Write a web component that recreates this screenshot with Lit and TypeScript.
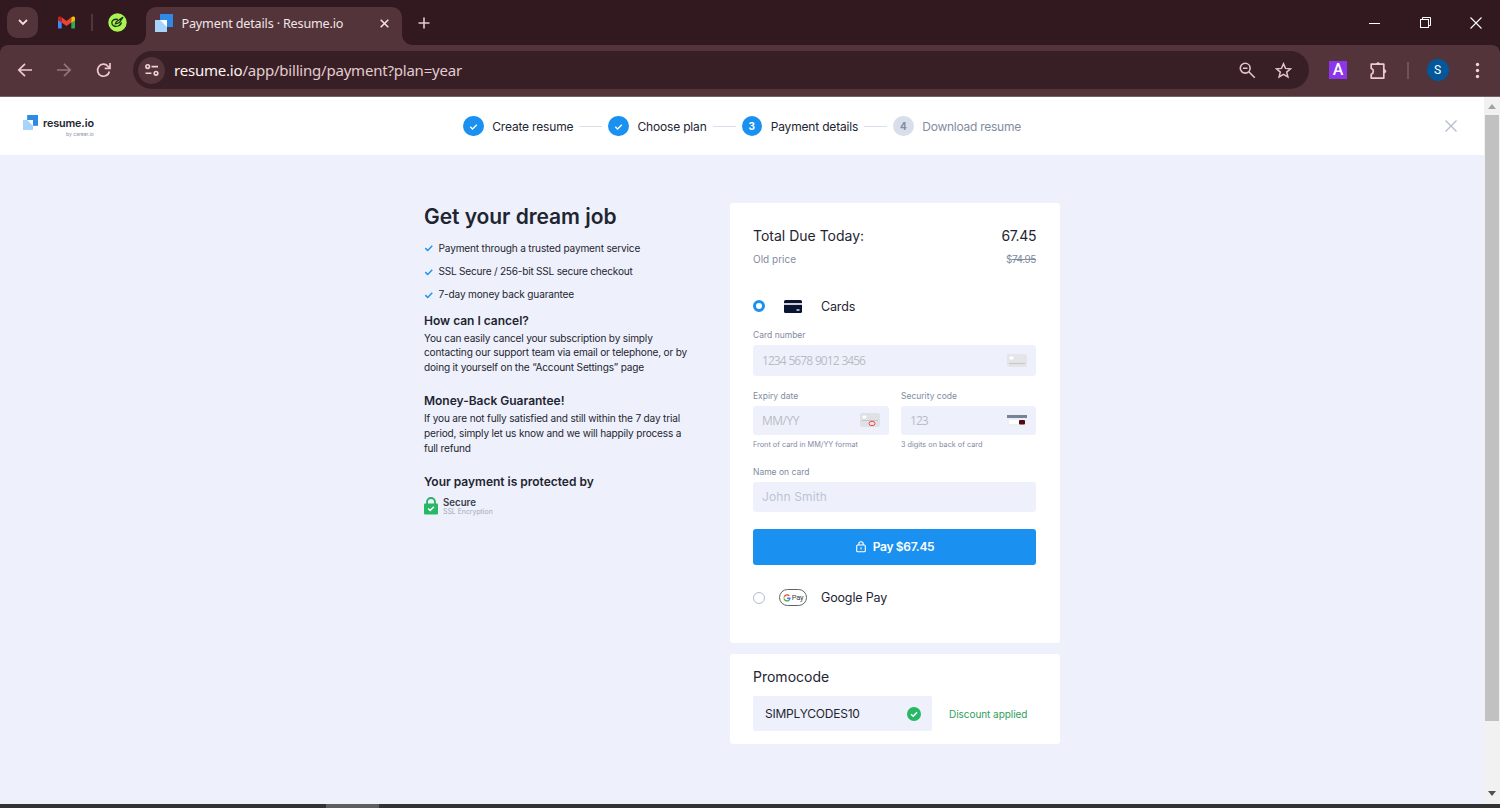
import { LitElement, html, svg, css } from "lit";
import { customElement } from "lit/decorators.js";

const tick = (cls: string) => html`<svg class=${cls} viewBox="0 0 10 10" fill="none" stroke="currentColor" stroke-width="1.5"><path d="M1.4 5.4l2.500 2.400 4.800-4.800"/></svg>`;

const resumeMark = svg`
  <rect x="5" y="0" width="13" height="13" fill="#2e8ae6"/>
  <rect x="0" y="6" width="12" height="12" fill="#a6d4fa"/>
  <path d="M5 6h7v7z" fill="#fff"/>`;

@customElement("app-root")
export class AppRoot extends LitElement {
  static styles = css`
    :host { display: flex; flex-direction: column; width: 1500px; height: 808px; overflow: hidden; font-family: Inter, sans-serif; color: #1e2532; background: #eef1fb; }
    * { box-sizing: border-box; }
    svg { display: block; flex: none; }
    .t { white-space: nowrap; }

    .tabs { height: 45px; flex: none; background: #32191f; display: flex; align-items: flex-start; font-family: "Noto Sans", sans-serif; }
    .tabs-left { display: flex; align-items: center; height: 45px; width: 146px; padding-left: 7px; }
    .chev { width: 31px; height: 31px; border-radius: 10px; background: #52343a; display: flex; align-items: center; justify-content: center; }
    .gmail { margin-left: 20px; }
    .sep { width: 1.500px; height: 17px; background: #52343a; margin-left: 16px; }
    .green { margin-left: 15.500px; }
    .tab { width: 256px; height: 38px; margin-top: 7px; background: #52343a; border-radius: 10px 10px 0 0; display: flex; align-items: center; padding: 0 13px 6px 9px; position: relative; }
    .tab::before, .tab::after { content: ""; position: absolute; bottom: 0; width: 10px; height: 10px; }
    .tab::before { left: -10px; background: radial-gradient(circle at 0 0, transparent 9.5px, #52343a 10px); }
    .tab::after { right: -10px; background: radial-gradient(circle at 100% 0, transparent 9.5px, #52343a 10px); }
    .tab-title { font-size: 12.6px; letter-spacing: -0.17px; color: #f3e4e6; margin-left: 8.5px; flex: 1; }
    .plus { margin: 17px 0 0 16px; }
    .win { margin-left: auto; display: flex; align-items: center; height: 45px; gap: 39px; padding-right: 18px; }

    .barwrap { background: #32191f; flex: none; }
    .toolbar { height: 52px; background: #52343a; display: flex; align-items: center; border-bottom: 1px solid #7a6065; border-radius: 8px 8px 0 0; padding: 0 0 1px 16px; }
    .nav { display: flex; gap: 21px; width: 117px; }
    .omni { width: 1176px; height: 37.5px; border-radius: 19px; background: #381f25; display: flex; align-items: center; padding: 0 17px 0 5px; }
    .tune { width: 27px; height: 27px; border-radius: 50%; background: #52343a; display: flex; align-items: center; justify-content: center; }
    .url { font: 15px/20px "Noto Sans", sans-serif; letter-spacing: -0.21px; color: #e3ccd0; margin-left: 9px; flex: 1; }
    .url b { font-weight: 400; color: #fdf3f4; }
    .omni-icons { display: flex; gap: 19px; align-items: center; }
    .ext { display: flex; align-items: center; flex: 1; padding-left: 20px; }
    .ext-a { width: 18px; height: 18px; background: #8d35ea; color: #fff; font: 500 16px/18px Roboto, sans-serif; text-align: center; }
    .puzzle { margin-left: 22px; }
    .vsep { width: 1.500px; height: 17px; background: #70525a; margin-left: 19px; }
    .avatar { width: 22px; height: 22px; border-radius: 50%; background: #03589c; color: #fff; font: 12px/22px Roboto, sans-serif; text-align: center; margin-left: 18px; }
    .dots { margin-left: 26px; }

    .view { flex: 1; display: flex; min-height: 0; }
    .page { width: 1484px; display: flex; flex-direction: column; }
    .scroll { width: 16px; background: #f1f1f1; display: flex; flex-direction: column; align-items: center; padding: 7px 0 8px; }
    .thumb { width: 14px; height: 606px; background: #c1c1c1; margin-top: 6px; margin-bottom: auto; }
    .head { height: 58px; flex: none; background: #fff; display: flex; align-items: center; justify-content: space-between; padding: 0 27px 0 23px; }
    .logo { display: flex; width: 104px; gap: 5px; height: 22px; }
    .logo-txt { display: flex; flex-direction: column; padding-top: 1.5px; }
    .logo-name { font: 600 10.8px/13px Inter, sans-serif; letter-spacing: -0.12px; color: #1e2532; }
    .logo-by { font: 5px/9px Inter, sans-serif; color: #8791a8; text-align: right; }
    .steps { display: flex; align-items: center; font-size: 12px; height: 22px; letter-spacing: -0.18px; }
    .num { width: 20.5px; height: 20.5px; border-radius: 50%; background: #1a91f0; color: #fff; display: flex; align-items: center; justify-content: center; font-size: 10px; font-weight: 700; letter-spacing: 0; margin-right: 8.7px; }
    .tk { width: 9px; height: 9px; }
    .off { color: #828ba2; }
    .num.off { background: #d9deeb; }
    .down { letter-spacing: -0.26px; }
    .line { width: 23px; height: 1px; background: #d9deeb; margin: 0 6px; }
    .closebox { width: 100px; display: flex; justify-content: flex-end; }

    .main { display: flex; width: 636px; margin: 48px auto 0; justify-content: space-between; align-items: flex-start; }
    .left { width: 290px; }
    h1 { margin: 0; font-size: 21px; line-height: 28px; font-weight: 600; letter-spacing: -0.05px; }
    ul { list-style: none; margin: 5.5px 0 4.5px; padding: 0; }
    li { display: flex; align-items: center; height: 23.2px; font-size: 10.1px; letter-spacing: -0.17px; gap: 5px; }
    li:nth-child(2) { letter-spacing: -0.23px; }
    .li-tick { width: 9.5px; height: 9.5px; color: #1a91f0; }
    h2 { margin: 0; font-size: 12px; line-height: 20px; font-weight: 600; letter-spacing: -0.01px; }
    p { margin: 0 0 16px; font-size: 10.1px; line-height: 14.9px; letter-spacing: -0.18px; }
    .ssl { display: flex; gap: 5px; margin-top: 5px; }
    .ssl-txt { display: flex; flex-direction: column; }
    .sec { font-size: 9.7px; line-height: 11px; font-weight: 600; color: #39404d; }
    .enc { font-size: 6.9px; line-height: 8px; color: #a3abbd; }

    .right { width: 330px; display: flex; flex-direction: column; gap: 11px; }
    .card { background: #fff; border-radius: 3px; padding: 0 24px 0 23px; }
    .pay { height: 440px; padding-top: 21px; }
    .row { display: flex; justify-content: space-between; align-items: center; }
    .total { font-size: 14px; height: 22px; }
    .sum { letter-spacing: -0.4px; }
    .old { font-size: 10px; height: 25px; color: #828ba2; }
    .was { letter-spacing: -0.45px; }
    .method { display: flex; align-items: center; font-size: 12.5px; height: 24px; letter-spacing: -0.15px; }
    .m1 { margin-top: 23px; }
    .radio { width: 12px; height: 12px; border-radius: 50%; border: 1px solid #b4bccf; }
    .radio.on { border: 3.2px solid #1a91f0; }
    .m-ico { width: 28px; margin: 0 14px; display: flex; justify-content: center; }
    .label { font-size: 8.5px; line-height: 12px; color: #828ba2; }
    .l1 { margin: 11px 0 4px; }
    .field { background: #eef1fb; border-radius: 3px; display: flex; align-items: center; justify-content: space-between; padding: 0 9px; height: 29.5px; font: 12px "Open Sans", sans-serif; color: #b9bcc5; }
    .f1 { height: 31px; }
    .digits { letter-spacing: -0.96px; word-spacing: 0.7px; }
    .mm { letter-spacing: -0.5px; }
    .pair { display: grid; grid-template-columns: 136px 135px; gap: 12px; margin-top: 14px; }
    .l2 { margin-bottom: 3.5px; }
    .hint { font-size: 7.3px; line-height: 10px; color: #828ba2; margin-top: 5px; }
    .l3 { margin: 16px 0 4px; }
    .name { font-family: Inter, sans-serif; letter-spacing: 0.12px; color: #bcc4d6; }
    .btn { height: 35.5px; margin-top: 17.5px; border-radius: 3px; background: #1a91f0; color: #fff; display: flex; align-items: center; justify-content: center; gap: 6.5px; padding-left: 1.5px; font-size: 12px; font-weight: 600; letter-spacing: -0.3px; }
    .m2 { margin-top: 21px; }
    .gpay { width: 28px; height: 17px; flex: none; border: 1px solid #5f6368; border-radius: 9px; display: flex; align-items: center; justify-content: center; gap: 1px; font: 7.5px Roboto, sans-serif; letter-spacing: -0.2px; color: #3c4043; }
    .promo { height: 90px; padding-top: 12px; }
    .promo-title { font-size: 14px; line-height: 22px; }
    .promo-row { display: flex; align-items: center; margin-top: 8px; }
    .promo-field { width: 179px; height: 35px; background: #eef1fb; border-radius: 2px; display: flex; align-items: center; justify-content: space-between; padding: 0 11px 0 12px; font-size: 12px; letter-spacing: -0.22px; }
    .disc { font-size: 10px; letter-spacing: -0.05px; color: #2f9e5b; margin-left: 17px; }
    .task { height: 4px; flex: none; background: #303234; display: flex; }
    .task i { width: 53px; margin-left: 326px; background: #5c5e60; }
  `;

  render() {
    return html`
      <div class="tabs">
        <div class="tabs-left">
          <div class="chev"><svg width="10" height="7" viewBox="0 0 10 7" fill="none" stroke="#f3dfe2" stroke-width="1.8"><path d="M1 1l4 4 4-4"/></svg></div>
          <svg class="gmail" width="17" height="13" viewBox="0 0 17 13"><path d="M0 2v10.5h3.7V5z" fill="#4285f4"/><path d="M13.3 5v7.5H17V2z" fill="#34a853"/><path d="M3.7 1.3v5.2l4.8 3.6 4.8-3.6V1.3L8.5 5z" fill="#ea4335"/><path d="M0 2v2.2l3.7 2.6V1.3C2 0 0 .5 0 2z" fill="#c5221f"/><path d="M17 2v2.2l-3.7 2.6V1.3C15 0 17 .5 17 2z" fill="#fbbc04"/></svg>
          <div class="sep"></div>
          <svg class="green" width="19" height="19" viewBox="0 0 19 19"><circle cx="9.5" cy="9.5" r="9.2" fill="#a8f552"/><g fill="none" stroke="#1d3012" stroke-width="1.3" stroke-linejoin="round"><path d="M9.800 6.500C6.500 5.600 3.800 7.300 3.800 9.800c0 3 3.200 4.200 6.200 3.200 2.200-.8 3.300-2.200 3.400-3.600"/><path d="M7.300 11l1-2.300 6.500-4.300-3.400 5.300z"/></g></svg>
        </div>
        <div class="tab">
          <svg width="18" height="18" viewBox="0 0 18 18">${resumeMark}</svg>
          <span class="tab-title"><span class="t">Payment details · Resume.io</span></span>
          <svg width="9" height="9" viewBox="0 0 9 9" stroke="#f3dfe2" stroke-width="1.6"><path d="M.7.7l7.600 7.600M8.300.7L.7 8.300"/></svg>
        </div>
        <svg class="plus" width="12" height="12" viewBox="0 0 12 12" stroke="#e6c9ce" stroke-width="1.600"><path d="M6 .5v11M.5 6h11"/></svg>
        <div class="win">
          <svg width="12" height="12" viewBox="0 0 12 12" stroke="#fff"><path d="M1 6.500h11"/></svg>
          <svg width="12" height="12" viewBox="0 0 12 12" fill="none" stroke="#fff"><rect x="1.500" y="2.500" width="8" height="8"/><path d="M3.500 2.500v-2h8v8H9.500"/></svg>
          <svg width="12" height="12" viewBox="0 0 12 12" stroke="#fff" stroke-width="1.100"><path d="M.5.5l11 11M11.500.5l-11 11"/></svg>
        </div>
      </div>
      <div class="barwrap"><div class="toolbar">
        <div class="nav">
          <svg width="18" height="16" viewBox="0 0 18 16" fill="none" stroke="#f0c9d0" stroke-width="1.700"><path d="M16 8H3M9 1.800L2.800 8 9 14.200"/></svg>
          <svg width="18" height="16" viewBox="0 0 18 16" fill="none" stroke="#94747a" stroke-width="1.700"><path d="M2 8h13M9 1.800L15.200 8 9 14.200"/></svg>
          <svg width="18" height="16" viewBox="0 0 18 16" fill="none" stroke="#f0c9d0" stroke-width="1.700"><path d="M15.400 9.500A6 6 0 1 1 14 4.200L15.600 6"/><path d="M16 1v5.300h-5.300"/></svg>
        </div>
        <div class="omni">
          <div class="tune"><svg width="14" height="12" viewBox="0 0 14 12" fill="none" stroke="#f0d3d8" stroke-width="1.600"><circle cx="2.700" cy="2.600" r="1.800"/><path d="M6.500 2.600H13M.5 9.300h6"/><circle cx="11" cy="9.300" r="1.800"/></svg></div>
          <span class="url"><span class="t"><b>resume.io</b>/app/billing/payment?plan=year</span></span>
          <div class="omni-icons">
            <svg width="17" height="17" viewBox="0 0 17 17" fill="none" stroke="#e3c3c9" stroke-width="1.600"><circle cx="6.200" cy="6.200" r="4.900"/><path d="M9.800 9.800l6 6M3.900 6.200h4.600"/></svg>
            <svg width="17" height="17" viewBox="0 0 17 17" fill="none" stroke="#e3c3c9" stroke-width="1.500"><path d="M8.500 1.800l2 4.600 5 .4-3.800 3.300 1.200 4.900-4.400-2.600L4.100 15l1.200-4.900L1.500 6.800l5-.4z"/></svg>
          </div>
        </div>
        <div class="ext">
          <div class="ext-a">A</div>
          <svg class="puzzle" width="19" height="19" viewBox="0 0 19 19" fill="none" stroke="#f0c9d0" stroke-width="1.700"><path d="M2.500 3.200h12.300v13.900H2.200v-3.800a3.100 3.100 0 0 0 0-5.900V3.200z" stroke-linejoin="round"/><path d="M7.200 3a1.900 1.900 0 0 1 3.600 0zM15.500 8.400a1.900 1.900 0 0 1 0 3.600z" fill="#f0c9d0" stroke-width="1"/></svg>
          <div class="vsep"></div>
          <div class="avatar">S</div>
          <svg class="dots" width="5" height="17" viewBox="0 0 5 17" fill="#f0d3d8"><circle cx="2.500" cy="2.500" r="1.700"/><circle cx="2.500" cy="8.500" r="1.700"/><circle cx="2.500" cy="14.500" r="1.700"/></svg>
        </div>
      </div></div>
      <div class="view">
        <div class="page">
          <div class="head">
            <div class="logo">
              <svg width="15" height="15" viewBox="0 0 18 18">${resumeMark}</svg>
              <div class="logo-txt"><span class="logo-name t">resume.io</span><span class="logo-by t">by career.io</span></div>
            </div>
            <div class="steps">
              <span class="num">${tick("tk")}</span><span class="t">Create resume</span><span class="line"></span>
              <span class="num">${tick("tk")}</span><span class="t">Choose plan</span><span class="line"></span>
              <span class="num">3</span><span class="t">Payment details</span><span class="line"></span>
              <span class="num off">4</span><span class="off down t">Download resume</span>
            </div>
            <div class="closebox"><svg width="12" height="12" viewBox="0 0 12 12" stroke="#b4bccf" stroke-width="1.300"><path d="M.5.5l11 11M11.500.5l-11 11"/></svg></div>
          </div>
          <div class="main">
            <div class="left">
              <h1><span class="t">Get your dream job</span></h1>
              <ul>${["Payment through a trusted payment service", "SSL Secure / 256-bit SSL secure checkout", "7-day money back guarantee"].map((s) => html`<li>${tick("li-tick")}<span class="t">${s}</span></li>`)}</ul>
              <h2><span class="t">How can I cancel?</span></h2>
              <p><span class="t">You can easily cancel your subscription by simply</span><br><span class="t">contacting our support team via email or telephone, or by</span><br><span class="t">doing it yourself on the “Account Settings” page</span></p>
              <h2><span class="t">Money-Back Guarantee!</span></h2>
              <p><span class="t">If you are not fully satisfied and still within the 7 day trial</span><br><span class="t">period, simply let us know and we will happily process a</span><br><span class="t">full refund</span></p>
              <h2><span class="t">Your payment is protected by</span></h2>
              <div class="ssl">
                <svg width="14" height="18" viewBox="0 0 14 18"><path d="M3 8V5a4 4 0 0 1 8 0v3" fill="none" stroke="#27b065" stroke-width="1.800"/><rect y="6.500" width="14" height="11" rx="1" fill="#27b865"/><path d="M4.200 11.500l2 2 3.700-3.800" fill="none" stroke="#fff" stroke-width="1.500"/></svg>
                <div class="ssl-txt"><span class="sec"><span class="t">Secure</span></span><span class="enc"><span class="t">SSL Encryption</span></span></div>
              </div>
            </div>
            <div class="right">
              <div class="card pay">
                <div class="row total"><span class="t">Total Due Today:</span><span class="t sum">67.45</span></div>
                <div class="row old"><span class="t">Old price</span><span class="t was">$<s>74.95</s></span></div>
                <div class="method m1"><span class="radio on"></span><span class="m-ico"><svg width="18" height="13" viewBox="0 0 18 13"><rect width="18" height="13" rx="1.500" fill="#0b1533"/><path d="M0 4h18" stroke="#fff" stroke-width="1.600"/><path d="M12.500 10h3" stroke="#fff" stroke-width="1.300"/></svg></span><span class="t">Cards</span></div>
                <div class="label l1"><span class="t">Card number</span></div>
                <div class="field f1"><span class="t digits">1234 5678 9012 3456</span><svg width="20" height="13" viewBox="0 0 20 13"><rect width="20" height="13" rx="2" fill="#e3e5e8"/><rect x="2.500" y="2.500" width="4" height="3" rx="1" fill="#fff"/><path d="M2 9.500h16" stroke="#c6cac9" stroke-width="1.300"/></svg></div>
                <div class="pair">
                  <div><div class="label l2"><span class="t">Expiry date</span></div><div class="field"><span class="t mm">MM/YY</span><svg width="20" height="14" viewBox="0 0 20 14"><rect width="20" height="14" rx="2" fill="#dfe1e4"/><rect x="2.500" y="2.500" width="4" height="3" rx="1" fill="#fff"/><path d="M2 7.500h16" stroke="#c3c6ca"/><ellipse cx="12" cy="10.500" rx="3" ry="2.200" fill="#f4dfe1" stroke="#ee4a50"/></svg></div><div class="hint"><span class="t">Front of card in MM/YY format</span></div></div>
                  <div><div class="label l2"><span class="t">Security code</span></div><div class="field"><span class="t digits">123</span><svg width="20" height="12" viewBox="0 0 20 12"><rect width="20" height="12" rx="1" fill="#eeeff1"/><rect y="1" width="20" height="3" fill="#778399"/><rect x="2" y="6" width="11" height="4" fill="#fff"/><rect x="12" y="6" width="6" height="4.500" rx="1" fill="#500b18"/></svg></div><div class="hint"><span class="t">3 digits on back of card</span></div></div>
                </div>
                <div class="label l3"><span class="t">Name on card</span></div>
                <div class="field name"><span class="t">John Smith</span></div>
                <div class="btn"><svg width="10" height="12" viewBox="0 0 10 12" fill="none" stroke="#fff" stroke-width="1.100"><rect x=".7" y="4" width="8.600" height="6.800" rx="1"/><path d="M2.800 4V2.900a2.200 2.200 0 0 1 4.400 0V4M5 6.300v2.200"/></svg><span class="t">Pay $67.45</span></div>
                <div class="method m2"><span class="radio"></span><span class="m-ico"><span class="gpay"><svg width="8" height="8" viewBox="0 0 8 8" fill="none" stroke-width="1.400"><path d="M6.300 1.900A3 3 0 0 0 1.300 2.700" stroke="#ea4335"/><path d="M1.300 2.700a3 3 0 0 0 0 2.600" stroke="#fbbc04"/><path d="M1.300 5.300a3 3 0 0 0 4.600.9" stroke="#34a853"/><path d="M5.900 6.200A3 3 0 0 0 7 4.200H4" stroke="#4285f4"/></svg>Pay</span></span><span class="t">Google Pay</span></div>
              </div>
              <div class="card promo">
                <div class="promo-title"><span class="t">Promocode</span></div>
                <div class="promo-row"><div class="promo-field"><span class="t">SIMPLYCODES10</span><svg width="14" height="14" viewBox="0 0 14 14" fill="none"><circle cx="7" cy="7" r="7" fill="#27b865"/><path d="M4 7.200l2.200 2.100L10 5.300" stroke="#fff" stroke-width="1.500"/></svg></div><span class="disc"><span class="t">Discount applied</span></span></div>
              </div>
            </div>
          </div>
        </div>
        <div class="scroll"><svg width="8" height="5" viewBox="0 0 8 5"><path d="M0 5l4-5 4 5z" fill="#a3a3a3"/></svg><div class="thumb"></div><svg width="8" height="5" viewBox="0 0 8 5"><path d="M0 0l4 5 4-5z" fill="#505050"/></svg></div>
      </div>
      <div class="task"><i></i></div>
    `;
  }
}
